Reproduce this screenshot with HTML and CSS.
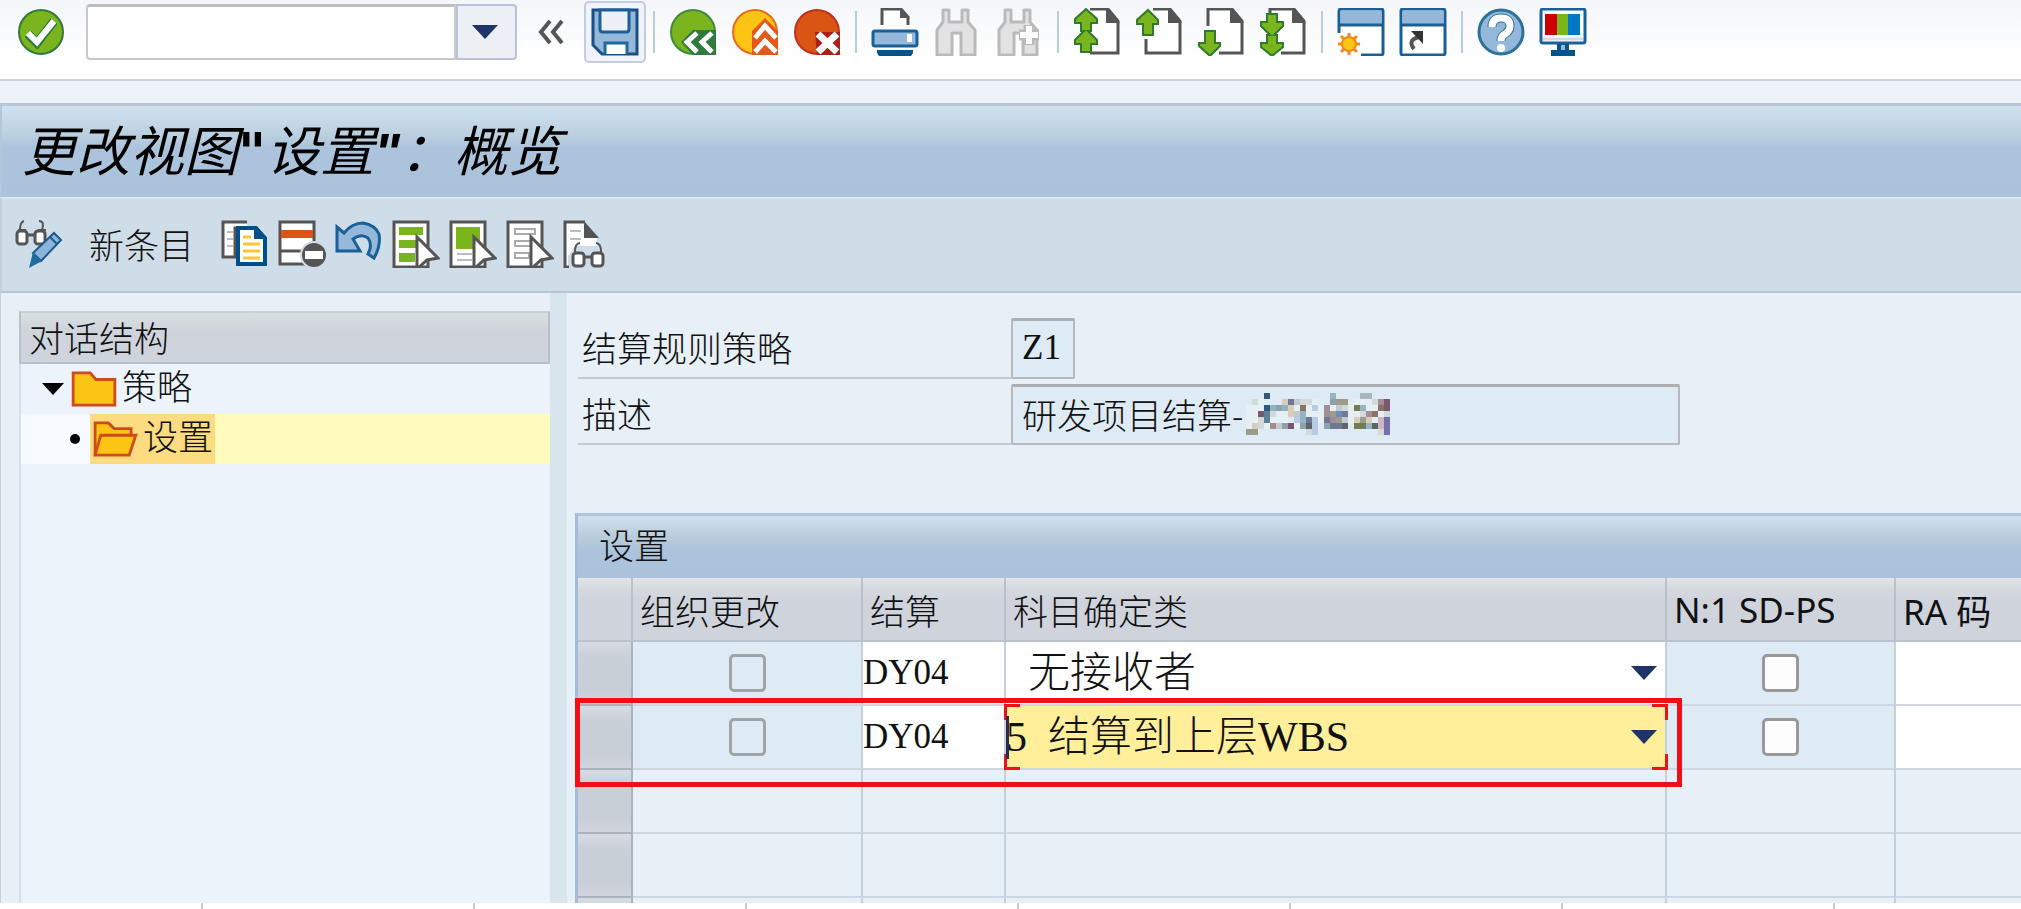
FILE: index.html
```
<!DOCTYPE html>
<html lang="zh-CN">
<head>
    <meta charset="UTF-8">
    <meta name="viewport" content="width=device-width, initial-scale=1.0">
    <title>更改视图"设置"：概览</title>
    <link rel="stylesheet" href="styles.css">
</head>
<body>
    <header class="system-bar">
        <button class="icon-btn enter" aria-label="回车">
            <svg viewBox="0 0 48 48"><circle cx="24" cy="24" r="22" fill="#7ab51d" stroke="#2f7a3c" stroke-width="2"/><path d="M11 26l9 9 17-22" fill="none" stroke="#2f7a3c" stroke-width="9"/><path d="M11 25l9 9 17-21" fill="none" stroke="#fff" stroke-width="6"/></svg>
        </button>
        <div class="command">
            <input type="text" aria-label="命令">
            <button aria-label="历史"><svg viewBox="0 0 26 14"><path d="M0 0h26L13 14z" fill="#1f3568"/></svg></button>
        </div>
        <button class="collapse" aria-label="收起">
            <svg viewBox="0 0 26 24"><path d="M12 1L3 12l9 11M24 1l-9 11 9 11" fill="none" stroke="#555" stroke-width="4"/></svg>
        </button>
        <button class="icon-btn save" aria-label="保存">
            <svg viewBox="0 0 48 48"><path d="M2 2h44v44H11l-9-9z" fill="#94b7da" stroke="#1a5082" stroke-width="3"/><path d="M9 2v19q0 3 3 3h23q3 0 3-3V2z" fill="#edf0f5" stroke="#1a5f96" stroke-width="3"/><path d="M14 46V35h22v11" fill="#fff" stroke="#1a6a9c" stroke-width="3"/></svg>
        </button>
        <span class="sep"></span>
        <button class="icon-btn" aria-label="返回">
            <svg viewBox="0 0 48 48"><circle cx="24" cy="24" r="22" fill="#7ab51d" stroke="#3d8a3d" stroke-width="2"/><path d="M12 34l12-12h23v25H24z" fill="#2f7a3c"/><path d="M28 25l-10 9 10 10M43 25l-10 9 10 10" fill="none" stroke="#fff" stroke-width="5"/></svg>
        </button>
        <button class="icon-btn" aria-label="退出">
            <svg viewBox="0 0 48 48"><circle cx="24" cy="24" r="22" fill="#fdc513" stroke="#ea6a1a" stroke-width="2"/><path d="M21 23l13-13 13 13v24H21z" fill="#e4581a"/><path d="M24 30l10-12 11 12M24 44l10-11 11 11" fill="none" stroke="#fff" stroke-width="5"/></svg>
        </button>
        <button class="icon-btn" aria-label="取消">
            <svg viewBox="0 0 48 48"><circle cx="24" cy="24" r="22" fill="#da5514" stroke="#bf2f1c" stroke-width="2"/><path d="M22 24h25v23H24z" fill="#ab1f16"/><path d="M25 26l19 18M44 26L25 44" stroke="#fff" stroke-width="7"/></svg>
        </button>
        <span class="sep"></span>
        <button class="icon-btn" aria-label="打印">
            <svg viewBox="0 0 48 48"><path d="M11 17V1h19l7 8v8" fill="#fff" stroke="#555" stroke-width="3"/><path d="M29 0l10 10H29z" fill="#555"/><rect x="2" y="23" width="44" height="15" rx="2" fill="#94b7da" stroke="#1a6096" stroke-width="3"/><rect x="36" y="26" width="5" height="8" fill="#fff"/><path d="M6 42h36v3l-2 3H8l-2-3z" fill="#00558f"/></svg>
        </button>
        <button class="icon-btn" aria-label="查找">
            <svg viewBox="0 0 48 48"><path id="glass" d="M10 2h6v12h13V2h6v12l7 8v25H28V25h-9v22H4V22l6-8z" fill="#e2e2e2" stroke="#bababa" stroke-width="3" stroke-linejoin="round"/></svg>
        </button>
        <button class="icon-btn" aria-label="继续查找">
            <svg viewBox="0 0 48 48"><use href="#glass"/><path d="M34 17v20M24 27h20" stroke="#bababa" stroke-width="11"/><path d="M34 18v18M25 27h18" stroke="#fff" stroke-width="6"/></svg>
        </button>
        <span class="sep"></span>
        <button class="icon-btn" aria-label="第一页">
            <svg viewBox="0 0 48 48"><path d="M17 1h18l10 12v32H17" fill="#fff" stroke="#555" stroke-width="3"/><path d="M33 0l14 15H33z" fill="#555"/><path d="M13 1l11 10v4h-6v8h-3l9 9v4h-6v8H8v-8H2v-4l9-9H8v-8H2v-4z" fill="#7ab51d" stroke="#2f7a2c" stroke-width="2"/></svg>
        </button>
        <button class="icon-btn" aria-label="上一页">
            <svg viewBox="0 0 48 48"><path d="M18 1h17l10 12v32H11V31" fill="#fff" stroke="#555" stroke-width="3"/><path d="M33 0l14 15H33z" fill="#555"/><path d="M13 2l10 10v4h-5v11H8V16H2v-4z" fill="#7ab51d" stroke="#2f7a2c" stroke-width="2"/></svg>
        </button>
        <button class="icon-btn" aria-label="下一页">
            <svg viewBox="0 0 48 48"><path d="M11 18V1h24l10 12v32H22" fill="#fff" stroke="#555" stroke-width="3"/><path d="M33 0l14 15H33z" fill="#555"/><path d="M13 48l10-10v-3h-5V23H8v12H2v3z" fill="#7ab51d" stroke="#2f7a2c" stroke-width="2"/></svg>
        </button>
        <button class="icon-btn" aria-label="最后一页">
            <svg viewBox="0 0 48 48"><path d="M11 8V1h24l10 12v32H22" fill="#fff" stroke="#555" stroke-width="3"/><path d="M33 0l14 15H33z" fill="#555"/><path d="M8 6h10v8h6v4l-9 9h3v8h6v4l-11 9-11-9v-4h6v-8h3l-9-9v-4h6z" fill="#7ab51d" stroke="#2f7a2c" stroke-width="2"/></svg>
        </button>
        <span class="sep"></span>
        <button class="icon-btn" aria-label="新建窗口">
            <svg viewBox="0 0 48 48"><path d="M2 25V3q0-2 2-2h40q2 0 2 2v42q0 2-2 2H24" fill="#fff" stroke="#1a6096" stroke-width="3"/><path d="M4 3h40v13H4z" fill="#94b7da"/><path d="M2 17h44" stroke="#1a6096" stroke-width="3"/><path d="M12 25v22M1 36h22M4 28l16 16M20 28L4 44" stroke="#ef8a1a" stroke-width="3"/><circle cx="12" cy="36" r="7" fill="#fdc513" stroke="#ef8a1a" stroke-width="2"/></svg>
        </button>
        <button class="icon-btn" aria-label="创建快捷方式">
            <svg viewBox="0 0 48 48"><rect x="2" y="1" width="44" height="46" rx="2" fill="#fff" stroke="#1a6096" stroke-width="3"/><path d="M4 3h40v13H4z" fill="#94b7da"/><path d="M2 17h44" stroke="#1a6096" stroke-width="3"/><path d="M15 41q-7-9 5-12" fill="none" stroke="#555" stroke-width="4"/><path d="M12 23h12v13z" fill="#333"/></svg>
        </button>
        <span class="sep"></span>
        <button class="icon-btn" aria-label="帮助">
            <svg viewBox="0 0 48 48"><circle cx="24" cy="24" r="22" fill="#94b7da" stroke="#2d7296" stroke-width="3"/><path d="M15 19q0-9 9-9t9 8q0 5-5 8-4 2-4 7" fill="none" stroke="#2d7296" stroke-width="9"/><path d="M15 19q0-9 9-9t9 8q0 5-5 8-4 2-4 7" fill="none" stroke="#fff" stroke-width="7"/><circle cx="24" cy="40" r="4" fill="#fff"/></svg>
        </button>
        <button class="icon-btn" aria-label="自定义本地布局">
            <svg viewBox="0 0 48 48"><rect x="2" y="1" width="44" height="34" rx="2" fill="#fff" stroke="#1a6096" stroke-width="3"/><path d="M6 6h12v21H6z" fill="#c00"/><path d="M18 6h11v21H18z" fill="#7ab51d"/><path d="M29 6h12v21H29z" fill="#0078c8"/><path d="M4 31h40" stroke="#cfdcea" stroke-width="3"/><path d="M18 36h12v6h6v6H12v-6h6z" fill="#00558f"/><path d="M22 37h4v5h-4z" fill="#94b7da"/></svg>
        </button>
    </header>

    <h1 class="title">更改视图<span class="quote">"</span>设置<span class="quote slanted">"</span>：概览</h1>

    <nav class="app-bar">
        <button class="icon-btn" aria-label="显示/更改">
            <svg viewBox="0 0 48 48"><path d="M5 10q0-8 4-9M27 10q3-9-3-9M3 10h8M23 10h8" fill="none" stroke="#555" stroke-width="2"/><rect x="2" y="11" width="10" height="13" rx="3" fill="#fff" stroke="#555" stroke-width="3"/><rect x="20" y="11" width="10" height="13" rx="3" fill="#fff" stroke="#555" stroke-width="3"/><path d="M12 15h8" stroke="#555" stroke-width="3"/><path d="M18 33l21-20 7 7-20 21z" fill="#8fb4da" stroke="#1a5a90" stroke-width="2"/><path d="M14 48l4-16 9 9z" fill="#1f6d9d"/><path d="M35 17l7 7" stroke="#1a5a90" stroke-width="2"/></svg>
        </button>
        <button class="text-btn">新条目</button>
        <div class="tools">
            <button class="icon-btn" aria-label="复制为">
                <svg viewBox="0 0 48 48"><path d="M26 2H2v35h12V8h12" fill="#fff" stroke="#555" stroke-width="3"/><path d="M6 12h6M6 19h6M6 26h6" stroke="#bbb" stroke-width="2"/><path d="M17 8h18l9 10v26H17z" fill="#fff" stroke="#004e8a" stroke-width="4"/><path d="M33 6l13 13H33z" fill="#004e8a"/><path d="M22 17h8M22 24h17M22 31h17M22 38h17" stroke="#fdc533" stroke-width="3"/></svg>
            </button>
            <button class="icon-btn" aria-label="删除">
                <svg viewBox="0 0 48 48"><path d="M2 2h34v42H2z" fill="#fff" stroke="#555" stroke-width="3"/><path d="M3 10h32v8H3z" fill="#da5514"/><path d="M2 31h21" stroke="#555" stroke-width="3"/><circle cx="36" cy="35" r="13" fill="#555" stroke="#cfdde7" stroke-width="2"/><path d="M27 31h18v8H27z" fill="#fff"/></svg>
            </button>
            <button class="icon-btn" aria-label="撤消更改">
                <svg viewBox="0 0 48 48"><path d="M2 7l7 6Q17 3 28 3q12 2 16 11 2 12-5 24l-6-4q5-9 0-16-7-5-15 1l7 12H2z" fill="#94b7da" stroke="#1a6096" stroke-width="3"/></svg>
            </button>
            <button class="icon-btn" aria-label="全选">
                <svg viewBox="0 0 48 48"><path d="M2 2h34v45H2z" fill="#fff" stroke="#555" stroke-width="3"/><path d="M7 7h24v8H7zM7 20h24v8H7zM7 33h16v9H7z" fill="#7ab51d"/><path id="cursor" d="M25 17l21 21-11 2-10 9z" fill="#fff" stroke="#555" stroke-width="3"/></svg>
            </button>
            <button class="icon-btn" aria-label="选择块">
                <svg viewBox="0 0 48 48"><path d="M2 2h34v45H2z" fill="#fff" stroke="#555" stroke-width="3"/><path d="M7 7h24v22H7z" fill="#7ab51d"/><path d="M8 34h15M8 40h15" stroke="#bbb" stroke-width="2"/><use href="#cursor"/></svg>
            </button>
            <button class="icon-btn" aria-label="全部不选">
                <svg viewBox="0 0 48 48"><path d="M2 2h34v45H2z" fill="#fff" stroke="#555" stroke-width="3"/><path d="M9 9h20v5H9zM9 21h17v5H9zM9 33h14v5H9z" fill="#fff" stroke="#aaa" stroke-width="2"/><use href="#cursor"/></svg>
            </button>
            <button class="icon-btn" aria-label="显示">
                <svg viewBox="0 0 48 48"><path d="M5 47H2V2h20l12 16v8H12L5 36z" fill="#fff"/><path d="M6 47H2V2h20" fill="none" stroke="#555" stroke-width="3"/><path d="M21 1l15 17H21z" fill="#555"/><path d="M7 11h11M7 19h11" stroke="#bbb" stroke-width="2"/><path d="M12 32q0-9 5-9M38 32q0-9-5-9" fill="none" stroke="#555" stroke-width="2"/><rect x="10" y="33" width="11" height="13" rx="3" fill="#fff" stroke="#555" stroke-width="3"/><rect x="29" y="33" width="11" height="13" rx="3" fill="#fff" stroke="#555" stroke-width="3"/><path d="M21 37h8" stroke="#555" stroke-width="3"/></svg>
            </button>
        </div>
    </nav>

    <main class="work-area">
        <aside class="tree">
            <h2>对话结构</h2>
            <ul>
                <li class="node">
                    <svg class="arrow" viewBox="0 0 22 12"><path d="M0 0h22L11 12z"/></svg>
                    <svg class="folder" viewBox="0 0 48 38"><path d="M2 36V2h18l6 7h20v27z" fill="#fdc513" stroke="#cf4a1c" stroke-width="3"/></svg>
                    <a href="#strategy">策略</a>
                </li>
                <li class="node selected">
                    <span class="indent"><svg class="dot" viewBox="0 0 10 10"><circle cx="5" cy="5" r="5"/></svg></span>
                    <span class="label">
                        <svg class="folder" viewBox="0 0 48 38"><path d="M3 36V2h14l6 6h18v8" fill="#fdc513" stroke="#cf4a1c" stroke-width="3"/><path d="M3 36l6-21h37l-7 21z" fill="#fdc513" stroke="#cf4a1c" stroke-width="3"/></svg>
                        <a href="#settings">设置</a>
                    </span>
                </li>
            </ul>
        </aside>

        <section class="content">
            <form class="fields">
                <div class="field">
                    <label for="strategy">结算规则策略</label>
                    <input type="text" id="strategy" class="short" value="Z1" readonly>
                </div>
                <div class="field">
                    <label for="description">描述</label>
                    <div class="masked">
                        <input type="text" id="description" value="研发项目结算-" readonly>
                        <svg class="mask" viewBox="0 0 24 7" shape-rendering="crispEdges"></svg>
                    </div>
                </div>
            </form>

            <div class="grid" id="settings">
                <h2>设置</h2>
                <table>
                    <colgroup>
                        <col class="c-mark"><col class="c-org"><col class="c-profile"><col class="c-class"><col class="c-sd"><col>
                    </colgroup>
                    <thead>
                        <tr><th></th><th>组织更改</th><th>结算</th><th>科目确定类</th><th>N:1 SD-PS</th><th>RA 码</th></tr>
                    </thead>
                    <tbody>
                        <tr>
                            <td class="mark"></td>
                            <td class="check"><input type="checkbox" class="locked" aria-label="组织更改"></td>
                            <td class="edit"><input type="text" value="DY04" aria-label="结算"></td>
                            <td class="edit">
                                <div class="drop">
                                    <select class="inset" aria-label="科目确定类"><option>无接收者</option></select>
                                    <svg viewBox="0 0 26 14"><path d="M0 0h26L13 14z" fill="#1f3568"/></svg>
                                </div>
                            </td>
                            <td class="check"><input type="checkbox" aria-label="N:1 SD-PS"></td>
                            <td class="edit"></td>
                        </tr>
                        <tr>
                            <td class="mark"></td>
                            <td class="check"><input type="checkbox" class="locked" aria-label="组织更改"></td>
                            <td class="edit"><input type="text" value="DY04" aria-label="结算"></td>
                            <td class="edit">
                                <div class="drop focused">
                                    <select aria-label="科目确定类"><option>5&nbsp;&nbsp;结算到上层WBS</option></select>
                                    <svg viewBox="0 0 26 14"><path d="M0 0h26L13 14z" fill="#1f3568"/></svg>
                                    <i class="corner tl"></i><i class="corner tr"></i><i class="corner bl"></i><i class="corner br"></i>
                                    <i class="caret"></i>
                                </div>
                            </td>
                            <td class="check"><input type="checkbox" aria-label="N:1 SD-PS"></td>
                            <td class="edit"></td>
                        </tr>
                        <tr><td class="mark"></td><td></td><td></td><td></td><td></td><td></td></tr>
                        <tr><td class="mark"></td><td></td><td></td><td></td><td></td><td></td></tr>
                        <tr><td class="mark"></td><td></td><td></td><td></td><td></td><td></td></tr>
                    </tbody>
                </table>
                <div class="highlight"></div>
            </div>
        </section>
    </main>
    <footer class="ruler"></footer>
    <script src="mask.js"></script>
</body>
</html>
```
FILE: mask.js
```
// colour keys for the censored part of the description
const colors = {
    a: "#a9b6be", b: "#8fa0ae", c: "#5f7f96", d: "#2f587a", e: "#e6eff3",
    f: "#d9cdb8", g: "#6f7894", h: "#c4c8d0", i: "#8c7264", j: "#b8cbe2",
    k: "#5f6468", l: "#a48c94", m: "#7b5672", n: "#6a8fb5", o: "#747c52",
    p: "#7570ac", q: "#cfdad9", r: "#94b4c0", s: "#cbb6c2", t: "#9c9c8a"
};

const rows = [
    "...d..........r....aa...",
    ".qe...fghqqe..btt.eeeqlm",
    "eeedrbrfeiejelehqeoreeim",
    "eemcqeefhreeeltngeeqlieq",
    "eeqceee.jrgjegltheftfesp",
    "efqelhbmebkj.bggk.oorksp",
    "tt........qj..........qp"
];

const mask = document.querySelector(".mask");
rows.forEach((row, y) => {
    [...row].forEach((key, x) => {
        if (!colors[key]) return;
        const rect = document.createElementNS("http://www.w3.org/2000/svg", "rect");
        rect.setAttribute("x", x);
        rect.setAttribute("y", y);
        rect.setAttribute("width", 1);
        rect.setAttribute("height", 1);
        rect.setAttribute("fill", colors[key]);
        mask.appendChild(rect);
    });
});
```
FILE: styles.css
```
* {
    box-sizing: border-box;
}
body {
    margin: 0;
    height: 100vh;
    display: flex;
    flex-direction: column;
    overflow: hidden;
    background: #fff;
    color: #111;
    font-family: "Noto Sans", "Noto Sans CJK SC", sans-serif;
    font-size: 35px;
    font-weight: 300;
}
button, input, select {
    font: inherit;
    color: inherit;
    margin: 0;
    padding: 0;
    border: none;
    border-radius: 0;
    background: none;
}
h1, h2 {
    margin: 0;
    font-weight: 300;
}
a {
    color: inherit;
    text-decoration: none;
}
svg {
    display: block;
}
.icon-btn {
    width: 48px;
    height: 48px;
    flex: none;
}
.icon-btn svg {
    width: 48px;
    height: 48px;
}

/* system toolbar */
.system-bar {
    display: flex;
    align-items: center;
    gap: 14px;
    height: 81px;
    padding: 0 17px 16px;
    background: linear-gradient(#f4f6fa, #fff 60px);
    border-bottom: 2px solid #ccd3e0;
    flex: none;
}
.command {
    display: flex;
    width: 431px;
    height: 56px;
    margin: 0 7px;
}
.command input {
    flex: 1;
    min-width: 0;
    background: #fff;
    border: 2px solid #c9c9cb;
    border-top: 3px solid #bdbdbd;
    border-radius: 4px 0 0 4px;
}
.command button {
    width: 61px;
    padding-left: 14px;
    background: #eceff4;
    border: 2px solid #b5c3dd;
    border-radius: 0 4px 4px 0;
}
.command svg {
    width: 26px;
    height: 14px;
}
.collapse svg {
    width: 26px;
    height: 24px;
}
.save {
    width: 62px;
    height: 62px;
    padding-left: 5px;
    margin: 0 -7px 0 6px;
    background: #f0f3f9;
    border: 2px solid #c3cce0;
    border-radius: 5px;
}
.sep {
    width: 2px;
    height: 42px;
    background: #b3cde4;
}

/* title */
.title {
    height: 94px;
    margin-top: 22px;
    padding-left: 20px;
    line-height: 88px;
    font-size: 54px;
    font-style: italic;
    font-weight: 400;
    color: #000;
    background: linear-gradient(#d0e2f0, #bacfdf 30px, #abc3dc 42px, #abc3da);
    border-top: 3px solid #bcc6da;
    border-left: 2px solid #b4c6da;
    flex: none;
    box-shadow: 0 -22px #eef2f9;
}
.quote {
    font-family: "DejaVu Sans", sans-serif;
    font-weight: bold;
    font-style: normal;
}
.quote.slanted {
    font-family: "Liberation Sans", sans-serif;
    font-style: italic;
}

/* application toolbar */
.app-bar {
    display: flex;
    align-items: center;
    height: 96px;
    padding: 0 13px 3px;
    background: #cfdde8;
    border-top: 2px solid #dbe7f0;
    border-bottom: 2px solid #b5c6d8;
    border-left: 2px solid #c5cedd;
    flex: none;
}
.text-btn {
    margin: 0 27px 0 26px;
}
.tools {
    display: flex;
    gap: 9px;
}

/* work area */
.work-area {
    flex: 1;
    min-height: 0;
    display: flex;
    overflow: hidden;
    background: #e8f0f7;
}
.tree {
    width: 567px;
    flex: none;
    padding: 18px 0 0 18px;
    border-left: 1px solid #c9cfd8;
    border-right: 17px solid #d9e5ed;
    display: flex;
    flex-direction: column;
}
.tree h2 {
    height: 53px;
    padding-left: 8px;
    font-size: 35px;
    line-height: 52px;
    background: linear-gradient(#dadfe2, #ced3dc 20px);
    border: 2px solid #b9c1cb;
    border-top-color: #c8d0d8;
}
.tree ul {
    flex: 1;
    margin: 0;
    padding: 0;
    list-style: none;
    background: #ecf3fb;
    border-left: 2px solid #d5dfea;
}
.node {
    display: flex;
    align-items: center;
    height: 50px;
    padding-left: 21px;
    line-height: 46px;
}
.node a {
    height: 50px;
}
.arrow {
    width: 22px;
    height: 12px;
    margin-right: 7px;
}
.folder {
    width: 46px;
    height: 36px;
    margin-right: 5px;
}
.node.selected {
    padding-left: 0;
    background: #fffbbd;
}
.indent {
    width: 69px;
    height: 50px;
    padding: 20px 0 0 49px;
    background: #f7fafe;
}
.dot {
    width: 10px;
    height: 10px;
}
.label {
    display: flex;
    align-items: center;
    height: 50px;
    padding: 0 2px;
    background: #fddb80;
}
.content {
    flex: 1;
    min-width: 0;
    padding: 25px 0 0 8px;
}
.fields {
    display: flex;
    flex-direction: column;
    gap: 5px;
    margin-bottom: 68px;
}
.field {
    display: flex;
    height: 61px;
}
.field label {
    width: 433px;
    margin-left: 3px;
    padding-left: 4px;
    line-height: 62px;
    border-bottom: 2px solid #c6cacf;
}
.field input {
    width: 669px;
    height: 61px;
    padding: 0 0 3px 9px;
    background: #deebf5;
    border: 2px solid #b4bac0;
    border-top: 3px solid #adb0b3;
    border-radius: 2px;
}
.field .short {
    width: 64px;
    font-family: "Liberation Serif", serif;
}
.masked {
    position: relative;
}
.mask {
    position: absolute;
    left: 235px;
    top: 9px;
    width: 144px;
    height: 42px;
}

/* table */
.grid {
    position: relative;
    border-left: 3px solid #a5bcd6;
    border-top: 3px solid #b0c5de;
}
.grid h2 {
    height: 62px;
    padding-left: 21px;
    font-size: 35px;
    line-height: 60px;
    background: linear-gradient(#d0e0f0, #bacddb 20px, #abc3dc 36px, #abc3da);
}
table {
    width: 100%;
    table-layout: fixed;
    border-collapse: separate;
    border-spacing: 0;
}
.c-mark {
    width: 55px;
}
.c-org {
    width: 230px;
}
.c-profile {
    width: 143px;
}
.c-class {
    width: 661px;
}
.c-sd {
    width: 229px;
}
th {
    height: 64px;
    padding: 0 0 0 7px;
    text-align: left;
    font-weight: 300;
    white-space: nowrap;
    background: linear-gradient(#e2e5e6, #d6dadf 10px, #ced3dc 24px);
    border-right: 2px solid #b7c0cb;
    border-bottom: 2px solid #bac3cd;
}
th:nth-child(n+5) {
    font-weight: 400;
}
td {
    height: 64px;
    padding: 0;
    border-right: 2px solid #c6cfdc;
    border-bottom: 2px solid #cdd6e1;
}
th:last-child, td:last-child {
    border-right: none;
}
.mark {
    background: linear-gradient(#d8dbe2, #c9cfd7 16px, #c9cfd7 50px, #d2d4dd);
    border-color: #aab3c0;
}
.check {
    text-align: center;
    background: #deebf5;
}
.check input {
    appearance: none;
    display: block;
    width: 37px;
    height: 38px;
    margin: 0 auto;
    background: #fdfdfd;
    border: 3px solid #999;
    border-radius: 5px;
}
.check .locked {
    background: #deebf5;
    border-color: #a0a4a6;
}
.edit {
    background: #fff;
}
.edit input {
    display: block;
    width: 100%;
    height: 62px;
    font-family: "Liberation Serif", serif;
    font-size: 35px;
}
.drop {
    position: relative;
    height: 62px;
}
.drop select {
    appearance: none;
    width: 100%;
    height: 62px;
    font-family: "Liberation Serif", "Noto Sans CJK SC", serif;
    font-size: 42px;
}
.drop .inset {
    padding-left: 22px;
}
.drop svg {
    position: absolute;
    right: 8px;
    top: 24px;
    width: 26px;
    height: 14px;
}
.focused {
    background: #ffee9a;
}
.corner {
    position: absolute;
    width: 16px;
    height: 16px;
    border: 0 solid #e8131c;
}
.tl {
    left: -2px;
    top: -2px;
    border-width: 3px 0 0 3px;
}
.tr {
    right: -3px;
    top: -2px;
    border-width: 3px 3px 0 0;
}
.bl {
    left: -2px;
    bottom: -2px;
    border-width: 0 0 3px 3px;
}
.br {
    right: -3px;
    bottom: -2px;
    border-width: 0 3px 3px 0;
}
.caret {
    position: absolute;
    left: 0;
    top: 10px;
    width: 3px;
    height: 43px;
    background: #2a2a55;
}
.highlight {
    position: absolute;
    left: -3px;
    top: 182px;
    width: 1107px;
    height: 89px;
    border: 5px solid #f20d18;
    pointer-events: none;
}

.ruler {
    height: 6px;
    flex: none;
    background: repeating-linear-gradient(90deg, #ccc 0, #ccc 2px, #fff 2px, #fff 272px) 201px 0 no-repeat;
}
```
